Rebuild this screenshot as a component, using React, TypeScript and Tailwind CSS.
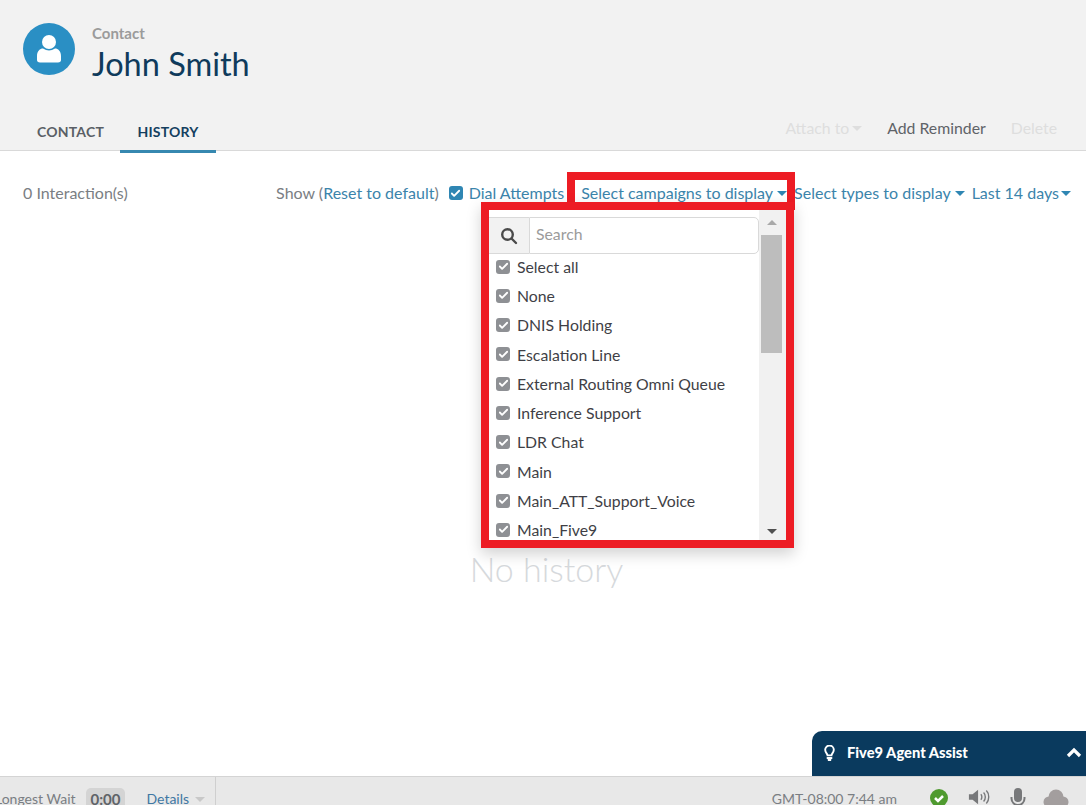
import React from 'react'
import { Check } from 'lucide-react'

const campaigns = [
  'Select all',
  'None',
  'DNIS Holding',
  'Escalation Line',
  'External Routing Omni Queue',
  'Inference Support',
  'LDR Chat',
  'Main',
  'Main_ATT_Support_Voice',
  'Main_Five9',
]

const Caret = ({ className }: { className: string }) => (
  <span className={`inline-block w-0 h-0 border-x-[5px] border-x-transparent border-t-[5px] ${className}`} />
)

const CampaignDropdown = () => (
  <div className="absolute left-[489px] top-[59px] z-10 w-[297px] h-[330px] bg-white flex overflow-hidden">
    <div className="w-[270px] shrink-0">
      <div className="flex h-[37px] mt-[7px] -mb-[2px]">
        <div className="w-[40px] bg-[#f2f2f2] border-y border-[#d9d9d9] flex items-center justify-center">
          <svg width="18" height="18" viewBox="0 0 18 18" fill="none" stroke="#4a4a4a" strokeWidth="2.4">
            <circle cx="7.5" cy="7.5" r="5.3" />
            <path d="M11.5 11.5 16 16" strokeLinecap="round" />
          </svg>
        </div>
        <div className="flex-1 border border-[#d9d9d9] rounded-r-[5px] pl-[6px] pb-[3px] flex items-center text-[15.8px] text-[#9b9b9b]">
          Search
        </div>
      </div>
      <ul>
        {campaigns.map((name) => (
          <li key={name} className="h-[29.25px] pl-[7px] flex items-center gap-[7px] text-[15.8px] text-[#3f3f46] whitespace-nowrap">
            <span className="w-[14px] h-[14px] rounded-[3px] bg-[#8e9094] flex items-center justify-center shrink-0">
              <Check size={11} color="#fff" strokeWidth={4} />
            </span>
            {name}
          </li>
        ))}
      </ul>
    </div>
    <div className="relative flex-1 bg-[#f1f1f1]">
      <Scroller />
    </div>
  </div>
)

const Scroller = () => (
  <>
    <span className="absolute left-[8px] top-[10px] w-0 h-0 border-x-[5px] border-x-transparent border-b-[5px] border-b-[#a9a9a9]" />
    <div className="absolute left-[2px] top-[25px] w-[21px] h-[118px] bg-[#bdbdbd]" />
    <span className="absolute left-[8px] top-[319px] w-0 h-0 border-x-[5px] border-x-transparent border-t-[5px] border-t-[#505050]" />
  </>
)

const App: React.FC = () => {
  return (
    <div className="relative w-[1086px] h-[805px] overflow-hidden flex flex-col bg-white text-[#5f6368] font-['Lato','Open_Sans',sans-serif]">
      <header className="h-[151px] shrink-0 bg-[#f2f2f2] border-b border-[#d9d9d9] flex flex-col">
        <div className="flex pl-[23px] pt-[23px] gap-[17px]">
          <div className="w-[52px] h-[52px] rounded-full bg-[#2a8fc4] flex items-center justify-center">
            <svg width="26" height="30" viewBox="0 0 26 30" fill="#fff">
              <circle cx="13" cy="8" r="7" />
              <path d="M1 22c0-5 3-7.500 6-7.500 2 1.300 4 2 6 2s4-.7 6-2c3 0 6 2.500 6 7.500v4c0 1.500-1 2.500-3 2.500H4c-2 0-3-1-3-2.500z" />
            </svg>
          </div>
          <div>
            <div className="text-[15px] leading-[20px] font-bold text-[#9b9b9b]">Contact</div>
            <div className="text-[32.5px] leading-[42px] text-[#0f3b5c]">John Smith</div>
          </div>
        </div>
        <div className="mt-auto flex items-end justify-between pr-[29px]">
          <nav className="flex pl-[21px] pr-[0px] text-[14px] font-bold">
            <div className="w-[99px] h-[40px] pt-[3px] flex items-center justify-center text-[#5a5f66] tracking-[0.2px]">
              CONTACT
            </div>
            <div className="w-[96px] h-[43px] -mb-[3px] pt-[3px] border-b-[3px] border-[#3688b0] flex items-center justify-center text-[#14405f] tracking-[0.2px]">
              HISTORY
            </div>
          </nav>
          <div className="flex items-center h-[44px] text-[15.8px]">
            <span className="text-[#dedede] flex items-center gap-[3px]">
              Attach to
              <Caret className="border-t-[#dedede]" />
            </span>
            <span className="ml-[25px] text-[#5f6368]">Add Reminder</span>
            <span className="ml-[25px] text-[#dedede]">Delete</span>
          </div>
        </div>
      </header>

      <main className="relative flex-1">
        <div className="flex items-center h-[20px] mt-[32px] pl-[23px] pr-[15px] text-[16px]">
          <span className="text-[#7a7e83]">0 Interaction(s)</span>
          <span className="ml-auto text-[#7a7e83]">
            Show (<span className="text-[#3b84ab]">Reset to default</span>)
          </span>
          <span className="ml-[10px] w-[14px] h-[14px] rounded-[3px] bg-[#2f86b3] flex items-center justify-center">
            <Check size={11} color="#fff" strokeWidth={4} />
          </span>
          <span className="ml-[6px] text-[#3b84ab]">Dial Attempts</span>
          <span className="ml-[17px] text-[#3b84ab] flex items-center gap-[4px]">
            Select campaigns to display
            <Caret className="border-t-[#2f86b3]" />
          </span>
          <span className="ml-[7px] text-[#3b84ab] flex items-center gap-[4px]">
            Select types to display
            <Caret className="border-t-[#2f86b3]" />
          </span>
          <span className="ml-[7px] text-[#3b84ab] flex items-center gap-[2px]">
            Last 14 days
            <Caret className="border-t-[#2f86b3]" />
          </span>
        </div>

        <div className="mt-[344px] pl-[7px] text-center text-[34px] leading-[44px] font-light text-[#d6d9dc]">No history</div>

        <CampaignDropdown />

        {/* red annotations drawn on top of the screenshot */}
        <div className="absolute left-[567px] top-[21px] z-20 w-[228px] h-[38px] border-[8px] border-b-0 border-[#ed1c24]" />
        <div className="absolute left-[481px] top-[51px] z-20 w-[313px] h-[346px] border-[8px] border-[#ed1c24] shadow-[0_6px_14px_rgba(0,0,0,0.18)]" />

        <div className="absolute right-0 bottom-0 z-20 w-[274px] h-[45px] bg-[#0a3a5e] rounded-tl-[10px] flex items-center pl-[12px] pr-[4px] pb-[2px] text-white">
          <svg width="11" height="16" viewBox="0 0 14 20" fill="none" stroke="#fff" strokeWidth="2.400">
            <path d="M4.500 13c0-2-3-3.500-3-7a5.500 5.500 0 0 1 11 0c0 3.500-3 5-3 7z" />
            <path d="M4.500 16.500h5M6 19h2" strokeWidth="2.600" strokeLinecap="round" />
          </svg>
          <span className="ml-[12px] text-[14.7px] font-black">Five9 Agent Assist</span>
          <svg className="ml-auto" width="16" height="11" viewBox="0 0 16 11" fill="none" stroke="#fff" strokeWidth="3.200">
            <path d="M2 9 8 3l6 6" />
          </svg>
        </div>
      </main>

      <footer className="h-[29px] shrink-0 bg-[#e8e8e8] border-t border-[#d4d4d4] flex items-start text-[14px] leading-[18px] text-[#7a7e83] overflow-hidden">
        <div className="w-[216px] h-full shrink-0 border-r border-[#cfcfcf] flex items-start pt-[13px] whitespace-nowrap">
          <span className="-ml-[5px]">Longest Wait</span>
          <span className="ml-[10px] -mt-[2px] px-[5px] h-[22px] rounded-t-[5px] bg-[#d4d4d4] font-bold text-[15px] text-[#5f6368] flex items-center">0:00</span>
          <span className="ml-[21px] text-[#3f77a3]">Details</span>
          <Caret className="ml-[6px] mt-[7px] border-t-[#c8c8c8]" />
        </div>
        <span className="ml-auto pt-[13px] whitespace-nowrap">GMT-08:00 7:44 am</span>
        <div className="flex items-start gap-[20px] ml-[33px] mr-[17px] pt-[11px]">
          <svg className="mt-[1px]" width="18" height="18" viewBox="0 0 18 18">
            <circle cx="9" cy="9" r="9" fill="#4f9a2f" />
            <path d="m5 9 3 3 5-5" fill="none" stroke="#fff" strokeWidth="2.500" />
          </svg>
          <svg width="22" height="18" viewBox="0 0 24 18" fill="none" stroke="#77787a" strokeWidth="1.500">
            <path d="M1 6h4l6-5v16l-6-5H1z" fill="#77787a" stroke="none" />
            <path d="M14 6c1.500 1.500 1.500 4.500 0 6M17 4c2.500 2.500 2.500 7.500 0 10M20 2c3.500 3.500 3.500 10.500 0 14" />
          </svg>
          <svg width="16" height="20" viewBox="0 0 16 20" fill="none" stroke="#77787a" strokeWidth="2">
            <rect x="4" y="0" width="8" height="14" rx="4" fill="#77787a" stroke="none" />
            <path d="M1.500 9v1.500a6.500 6.500 0 0 0 13 0V9M8 17v3" />
          </svg>
          <svg className="mt-[1px] -ml-[3px]" width="26" height="20" viewBox="0 0 26 20" fill="#a39e9e">
            <circle cx="13" cy="8" r="7.500" />
            <circle cx="6" cy="13" r="5.500" />
            <circle cx="20" cy="13" r="5.500" />
            <rect x="6" y="12" width="14" height="8" />
          </svg>
        </div>
      </footer>
    </div>
  )
}

export default App
